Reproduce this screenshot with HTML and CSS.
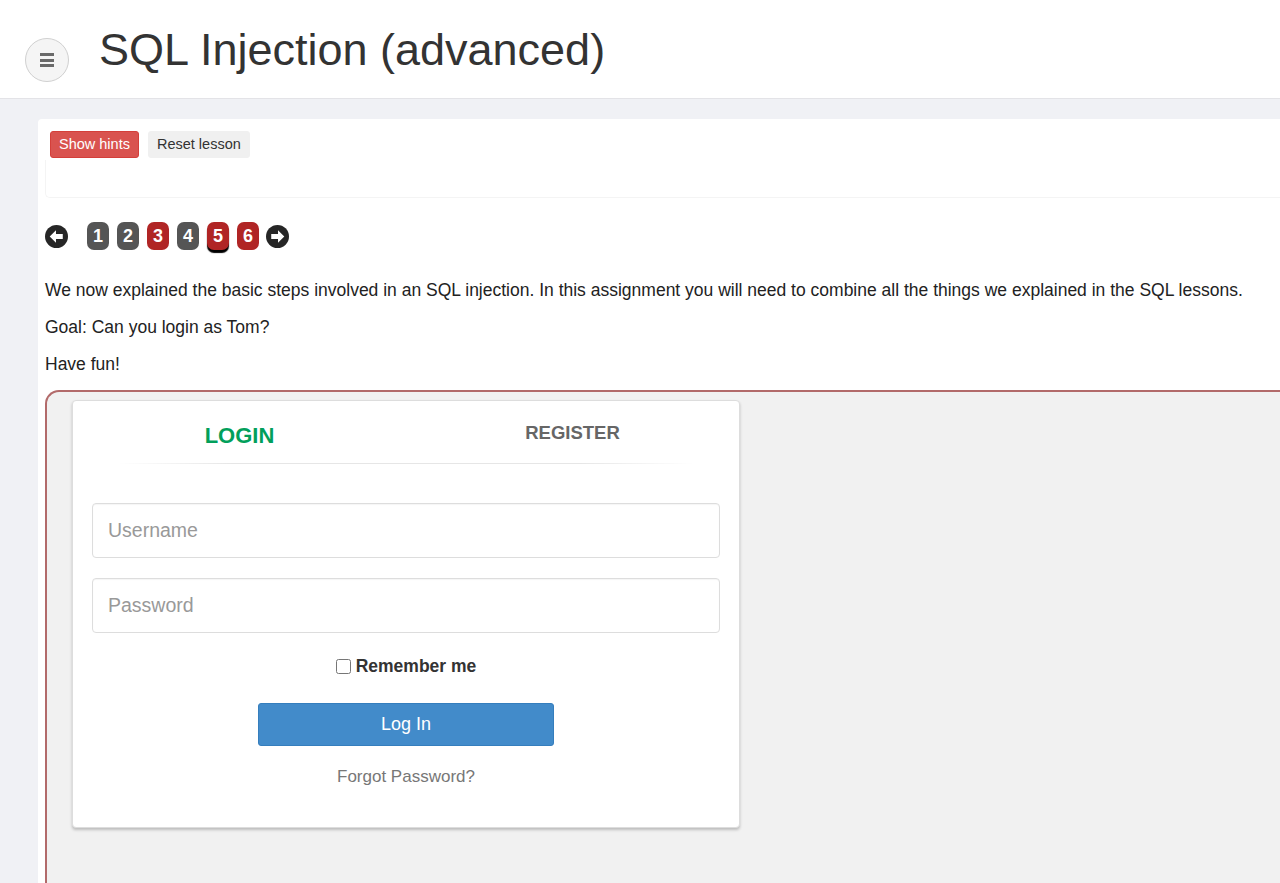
FILE: index.html
```html
<!DOCTYPE html>
<html>
<head>
    <meta charset="UTF-8">
    <title>SQL Injection (advanced)</title>
    <link rel="stylesheet" href="styles.css">
</head>
<body>

    <div class="header">
        <button class="menu-toggle">
            <span class="bar"></span>
            <span class="bar"></span>
            <span class="bar"></span>
        </button>
        <h1 class="page-title">SQL Injection (advanced)</h1>
    </div>

    <div class="main">
        <div class="lesson">
            <div class="lesson-buttons">
                <button class="btn btn-hints">Show hints</button>
                <button class="btn btn-reset">Reset lesson</button>
            </div>
            <div class="hint-box"></div>

            <div class="pager">
                <span class="pager-arrow">
                    <svg width="23" height="23" viewBox="0 0 22 22">
                        <circle cx="11" cy="11" r="11" fill="#262626"/>
                        <path d="M4.5 11 L10.5 5 L10.5 8.5 L17 8.5 L17 13.5 L10.5 13.5 L10.5 17 Z" fill="#fff"/>
                    </svg>
                </span>
                <div class="pages">
                    <span class="page-link page-done">1</span>
                    <span class="page-link page-done">2</span>
                    <span class="page-link page-todo">3</span>
                    <span class="page-link page-done">4</span>
                    <span class="page-link page-todo page-current">5</span>
                    <span class="page-link page-todo">6</span>
                </div>
                <span class="pager-arrow">
                    <svg width="23" height="23" viewBox="0 0 22 22">
                        <circle cx="11" cy="11" r="11" fill="#262626"/>
                        <path d="M17.5 11 L11.5 5 L11.5 8.5 L5 8.5 L5 13.5 L11.5 13.5 L11.5 17 Z" fill="#fff"/>
                    </svg>
                </span>
            </div>

            <div class="lesson-text">
                <p>We now explained the basic steps involved in an SQL injection. In this assignment you will need to combine all the things we explained in the SQL lessons.</p>
                <p>Goal: Can you login as Tom?</p>
                <p>Have fun!</p>
            </div>

            <div class="attack-container">
                <div class="login-panel">
                    <div class="login-tabs">
                        <a class="tab tab-active">LOGIN</a>
                        <a class="tab">REGISTER</a>
                    </div>
                    <hr class="tab-rule">
                    <form class="login-form">
                        <input type="text" class="form-input" placeholder="Username">
                        <input type="password" class="form-input" placeholder="Password">
                        <label class="remember"><input type="checkbox"> Remember me</label>
                        <button type="button" class="btn-login">Log In</button>
                        <a class="forgot">Forgot Password?</a>
                    </form>
                </div>
            </div>
        </div>
    </div>

</body>
</html>
```

FILE: styles.css
```css
body {
    margin: 0;
    font-family: "Liberation Sans", Arial, sans-serif;
    color: #333;
    background: #f0f1f5;
    overflow: hidden;
}

.header {
    height: 99px;
    background: #fff;
    border-bottom: 1px solid #e3e3e7;
    display: flex;
    align-items: flex-start;
    box-sizing: border-box;
}
.menu-toggle {
    width: 44px;
    height: 44px;
    margin: 38px 0 0 25px;
    border-radius: 50%;
    border: 1px solid #d0d0d0;
    background: #f5f5f5;
    display: flex;
    flex-direction: column;
    align-items: center;
    justify-content: center;
    gap: 2.5px;
    padding: 0;
}
.menu-toggle .bar {
    width: 14px;
    height: 3px;
    background: #6a6a6a;
}
.page-title {
    margin: 22px 0 0 30px;
    font-size: 45px;
    font-weight: normal;
    line-height: 56px;
    color: #333;
}

.main {
    padding: 20px 0 0 38px;
}
.lesson {
    width: 1300px;
    min-height: 800px;
    background: #fff;
    border-top-left-radius: 4px;
    padding: 12px 0 0 7px;
}

.lesson-buttons {
    display: flex;
    gap: 9px;
    margin-left: 5px;
}
.btn {
    font-family: "Liberation Sans", Arial, sans-serif;
    font-size: 14.5px;
    line-height: 17px;
    padding: 4px 8px;
    border-radius: 3px;
    border: 1px solid transparent;
}
.btn-hints {
    background: #d9534f;
    border-color: #d43f3a;
    color: #fff;
}
.btn-reset {
    background: #f0f0f0;
    border-color: #f0f0f0;
    color: #333;
}
.hint-box {
    height: 37px;
    margin-top: 2px;
    border: 1px solid #f4f4f4;
    border-right: none;
    border-top: none;
    border-radius: 0 0 0 5px;
}

.pager {
    display: flex;
    align-items: center;
    margin-top: 24px;
    height: 28px;
}
.pager-arrow {
    display: flex;
    width: 23px;
    height: 23px;
}
.pages {
    display: flex;
    gap: 8px;
    margin: 0 7px 0 19px;
}
.page-link {
    width: 22px;
    height: 28px;
    border-radius: 7px;
    color: #fff;
    font-weight: bold;
    font-size: 18px;
    display: flex;
    align-items: center;
    justify-content: center;
}
.page-done {
    background: #555;
}
.page-todo {
    background: #b02525;
}
.page-current {
    box-shadow: 0 3px 1px #000;
}

.lesson-text {
    margin-top: 29px;
}
.lesson-text p {
    margin: 0 0 15px;
    font-size: 17.5px;
    line-height: 22px;
    color: #222;
}

.attack-container {
    border: 2px solid #b26a6a;
    border-right: none;
    border-bottom: none;
    border-top-left-radius: 14px;
    background: #f1f1f1;
    padding: 8px 0 0 25px;
    min-height: 520px;
}
.login-panel {
    width: 666px;
    background: #fff;
    border: 1px solid #ddd;
    border-radius: 4px;
    box-shadow: 0 2px 3px rgba(0, 0, 0, 0.22);
    padding-bottom: 40px;
}
.login-tabs {
    display: flex;
    height: 62px;
}
.tab {
    flex: 1;
    text-align: center;
    font-weight: bold;
    font-size: 18.5px;
    color: #666;
    padding-top: 21px;
}
.tab-active {
    color: #029f5b;
    font-size: 22px;
    padding-top: 22px;
}
.tab-rule {
    margin: 0 45px;
    height: 1px;
    border: 0;
    background: linear-gradient(to right, rgba(0,0,0,0), #e6e6e6 20%, #e6e6e6 80%, rgba(0,0,0,0));
}

.login-form {
    display: flex;
    flex-direction: column;
    align-items: center;
    padding: 39px 19px 0;
}
.form-input {
    width: 100%;
    height: 55px;
    box-sizing: border-box;
    border: 1px solid #ddd;
    border-radius: 4px;
    padding: 0 15px;
    font-family: "Liberation Sans", Arial, sans-serif;
    font-size: 19.5px;
    margin-bottom: 20px;
    box-shadow: inset 0 1px 1px rgba(0,0,0,0.04);
}
.form-input::placeholder {
    color: #999;
}
.remember {
    display: flex;
    align-items: center;
    gap: 5px;
    font-weight: bold;
    font-size: 17.5px;
    line-height: 20px;
    color: #333;
    margin-top: 3px;
}
.remember input {
    margin: 0;
    width: 15px;
    height: 15px;
}
.btn-login {
    margin-top: 27px;
    width: 296px;
    height: 43px;
    background: #428bca;
    border: 1px solid #357ebd;
    border-radius: 3px;
    color: #fff;
    font-family: "Liberation Sans", Arial, sans-serif;
    font-size: 18px;
}
.forgot {
    margin-top: 21px;
    font-size: 17px;
    line-height: 20px;
    color: #777;
}
```
